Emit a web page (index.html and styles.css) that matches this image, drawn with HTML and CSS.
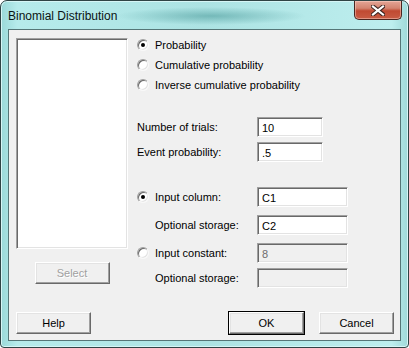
FILE: index.html
```html
<!DOCTYPE html>
<html lang="en">
<head>
  <meta charset="UTF-8" />
  <title>Binomial Distribution</title>
  <link rel="stylesheet" href="styles.css">
</head>
<body>
  <div class="window">
    <div class="titlebar">
      <span class="title">Binomial Distribution</span>
      <div class="close">
        <svg width="14" height="11" viewBox="0 0 14 11">
          <path d="M2 1.5 L12 9.5 M12 1.5 L2 9.5" stroke="#3d2420" stroke-width="4.2" stroke-linecap="square"/>
          <path d="M2 1.5 L12 9.5 M12 1.5 L2 9.5" stroke="#fff" stroke-width="2.2" stroke-linecap="square"/>
        </svg>
      </div>
    </div>

    <div class="client">
      <div class="main">
        <div class="left">
          <div class="listbox"></div>
          <button class="btn select" disabled>Select</button>
        </div>

        <div class="right">
          <div class="options">
            <div class="radio-row"><span class="radio on"></span>Probability</div>
            <div class="radio-row"><span class="radio"></span>Cumulative probability</div>
            <div class="radio-row"><span class="radio"></span>Inverse cumulative probability</div>
          </div>

          <div class="params">
            <div class="field"><span class="label">Number of trials:</span><input class="edit short" value="10"></div>
            <div class="field"><span class="label">Event probability:</span><input class="edit short" value=".5"></div>
          </div>

          <div class="source">
            <div class="field"><span class="label"><span class="radio on"></span>Input column:</span><input class="edit" value="C1"></div>
            <div class="field sub"><span class="label">Optional storage:</span><input class="edit" value="C2"></div>
            <div class="field"><span class="label"><span class="radio"></span>Input constant:</span><input class="edit" value="8" disabled></div>
            <div class="field sub last"><span class="label">Optional storage:</span><input class="edit" value="" disabled></div>
          </div>
        </div>
      </div>

      <div class="buttons">
        <button class="btn">Help</button>
        <span class="spacer"></span>
        <button class="btn default">OK</button>
        <button class="btn">Cancel</button>
      </div>
    </div>
  </div>
</body>
</html>
```

FILE: styles.css
```css
* { box-sizing: border-box; }
body {
  margin: 0;
  background: #fff;
  font-family: "Liberation Sans", Arial, sans-serif;
}
.window {
  width: 409px;
  height: 348px;
  border: 1px solid #2f4445;
  border-radius: 7px 7px 4px 4px;
  padding: 0 7px 6px 7px;
  display: flex;
  flex-direction: column;
  background:
    radial-gradient(ellipse 95px 9px at 210px 15px, rgba(70, 150, 150, 0.55), rgba(70, 150, 150, 0) 100%),
    linear-gradient(90deg, #9ad9d9 0%, #b6ebeb 4%, #ace3e3 50%, #bdeeee 96%, #9fd9d9 100%);
  box-shadow: inset 0 0 0 1px #d6f6f6;
}
.titlebar {
  height: 28px;
  display: flex;
  align-items: flex-start;
}
.title {
  font-size: 12px;
  color: #0b1414;
  margin-top: 8px;
}
.close {
  margin-left: auto;
  margin-right: -1px;
  width: 48px;
  height: 19px;
  border: 1px solid #4a2620;
  border-top: none;
  border-radius: 0 0 5px 5px;
  background: linear-gradient(#e4a596 0%, #d38470 40%, #c04a32 55%, #c85c44 100%);
  box-shadow: inset 0 0 0 1px rgba(255, 220, 210, 0.45);
  display: flex;
  align-items: center;
  justify-content: center;
}
.client {
  flex: 1;
  border: 1px solid #557677;
  background: #f0f0f0;
  display: flex;
  flex-direction: column;
  padding: 0 6px 6px 7px;
  font-size: 11px;
  color: #000;
}
.main {
  display: flex;
  gap: 9px;
}
.left {
  width: 112px;
  padding-top: 8px;
  display: flex;
  flex-direction: column;
  align-items: center;
}
.listbox {
  width: 112px;
  height: 211px;
  background: #fff;
  border: 1px solid;
  border-color: #a0a0a0 #fff #fff #a0a0a0;
  box-shadow: inset 1px 1px #696969, inset -1px -1px #e3e3e3;
}
.btn {
  width: 75px;
  height: 22px;
  font-family: "Liberation Sans", Arial, sans-serif;
  font-size: 11px;
  color: #000;
  background: #f0f0f0;
  border: 1px solid;
  border-color: #fff #696969 #696969 #fff;
  box-shadow: inset -1px -1px #a0a0a0, inset 1px 1px #e3e3e3;
  padding: 0;
}
.btn.select {
  margin-top: 13px;
  color: #a0a0a0;
  text-shadow: 1px 1px #fff;
}
.btn.default {
  outline: 1px solid #000;
  outline-offset: 0;
}
.right {
  flex: 1;
  padding-top: 5px;
}
.radio-row {
  height: 20px;
  display: flex;
  align-items: center;
}
.radio {
  width: 12px;
  height: 12px;
  border-radius: 50%;
  background: #fff;
  border: 1px solid;
  border-color: #a0a0a0 #f8f8f8 #f8f8f8 #a0a0a0;
  box-shadow: inset 1px 1px #696969, inset -1px -1px #e3e3e3;
  margin-right: 6px;
  display: flex;
  align-items: center;
  justify-content: center;
  flex: none;
}
.radio.on::after {
  content: "";
  width: 4px;
  height: 4px;
  border-radius: 50%;
  background: #000;
}
.params {
  margin-top: 22px;
  display: flex;
  flex-direction: column;
  gap: 5px;
}
.source {
  margin-top: 25px;
  display: flex;
  flex-direction: column;
  gap: 8px;
}
.source .field.last {
  margin-top: -3px;
}
.field {
  height: 20px;
  display: flex;
  align-items: center;
}
.label {
  width: 120px;
  display: flex;
  align-items: center;
}
.field.sub .label {
  padding-left: 18px;
}
.edit {
  width: 91px;
  height: 20px;
  font-family: "Liberation Sans", Arial, sans-serif;
  font-size: 11px;
  color: #000;
  background: #fff;
  border: 1px solid;
  border-color: #a0a0a0 #fff #fff #a0a0a0;
  box-shadow: inset 1px 1px #696969, inset -1px -1px #e3e3e3;
  padding: 1px 4px 0 4px;
  outline: none;
}
.edit.short {
  width: 66px;
}
.edit:disabled {
  background: #f0f0f0;
  color: #6d6d6d;
}
.buttons {
  margin-top: auto;
  display: flex;
  gap: 15px;
}
.spacer {
  flex: 1;
}
```
